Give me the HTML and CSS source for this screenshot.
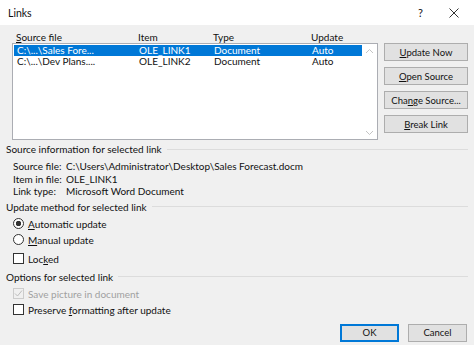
FILE: index.html
```html
<!DOCTYPE html>
<html lang="en">
<head>
  <title>Links</title>
  <meta charset="utf-8">
  <link rel="stylesheet" href="styles.css">
</head>
<body>
  <div class="dialog">
    <div class="titlebar">
      <span class="title">Links</span>
      <span class="help">?</span>
      <svg class="close" width="10" height="10" viewBox="0 0 10 10">
        <path d="M0.5 0.5 L9.5 9.5 M9.5 0.5 L0.5 9.5" stroke="#333" stroke-width="1"/>
      </svg>
    </div>

    <div class="content">
      <div class="top">
        <div class="links">
          <div class="list-head cols">
            <span><u>S</u>ource file</span>
            <span>Item</span>
            <span>Type</span>
            <span>Update</span>
          </div>
          <div class="list">
            <div class="rows">
              <div class="row cols selected">
                <span>C:\...\Sales Fore...</span>
                <span>OLE_LINK1</span>
                <span>Document</span>
                <span>Auto</span>
              </div>
              <div class="row cols">
                <span>C:\...\Dev Plans....</span>
                <span>OLE_LINK2</span>
                <span>Document</span>
                <span>Auto</span>
              </div>
            </div>
            <div class="scrollbar">
              <svg width="9" height="6" viewBox="0 0 9 6"><path d="M1 5 L4.5 1.5 L8 5" fill="none" stroke="#C4C4C4"/></svg>
              <svg width="9" height="6" viewBox="0 0 9 6"><path d="M1 1 L4.5 4.5 L8 1" fill="none" stroke="#C4C4C4"/></svg>
            </div>
          </div>
        </div>
        <div class="side-buttons">
          <button class="btn"><u>U</u>pdate Now</button>
          <button class="btn"><u>O</u>pen Source</button>
          <button class="btn">Cha<u>n</u>ge Source...</button>
          <button class="btn"><u>B</u>reak Link</button>
        </div>
      </div>

      <div class="group-title">Source information for selected link</div>
      <div class="info">
        <span>Source file:</span><span>C:\Users\Administrator\Desktop\Sales Forecast.docm</span>
        <span>Item in file:</span><span>OLE_LINK1</span>
        <span>Link type:</span><span>Microsoft Word Document</span>
      </div>

      <div class="group-title">Update method for selected link</div>
      <div class="options">
        <label class="option"><span class="radio checked"></span><span><u>A</u>utomatic update</span></label>
        <label class="option"><span class="radio"></span><span><u>M</u>anual update</span></label>
        <label class="option locked"><span class="check"></span><span>Loc<u>k</u>ed</span></label>
      </div>

      <div class="group-title">Options for selected link</div>
      <div class="options">
        <label class="option disabled">
          <span class="check">
            <svg width="9" height="9" viewBox="0 0 9 9"><path d="M1 4.5 L3.5 7 L8 1.5" fill="none" stroke="#BDBDBD" stroke-width="1"/></svg>
          </span>
          <span>Save picture in document</span>
        </label>
        <label class="option"><span class="check"></span><span>Preserve <u>f</u>ormatting after update</span></label>
      </div>

      <div class="footer">
        <button class="btn default">OK</button>
        <button class="btn">Cancel</button>
      </div>
    </div>
  </div>
</body>
</html>
```

FILE: styles.css
```css
*, *::before, *::after {
  margin: 0;
  padding: 0;
  box-sizing: border-box;
}

body {
  width: 474px;
  height: 348px;
  background-color: #FFFFFF;
  color: #111111;
  font-family: "Lato", sans-serif;
  font-size: 10px;
  white-space: nowrap;
}

u {
  text-decoration: underline;
  text-underline-offset: 1px;
}

.titlebar {
  display: flex;
  align-items: center;
  height: 25px;
  padding: 0 15px 0 8px;
  background-color: #FFFFFF;
  font-size: 10.5px;
}

.title {
  flex: 1;
}

.help {
  margin-right: 26px;
  font-size: 11px;
}

.content {
  height: 320px;
  padding: 6px 6px 0 6px;
  background-color: #F0F0F0;
}

.top {
  display: flex;
  gap: 6px;
}

.links {
  width: 372px;
}

.cols {
  display: grid;
  grid-template-columns: 122px 75px 98px 1fr;
}

.list-head {
  height: 12px;
  padding-left: 10px;
  line-height: 12px;
}

.list {
  display: flex;
  height: 97px;
  margin-left: 6px;
  border: 1px solid #ABADB3;
  background-color: #FFFFFF;
}

.rows {
  flex: 1;
  padding: 1px 0 0 1px;
}

.row {
  height: 11px;
  padding-left: 3px;
  line-height: 11px;
}

.row.selected {
  background-color: #0078D7;
  color: #FFFFFF;
}

.scrollbar {
  display: flex;
  flex-direction: column;
  justify-content: space-between;
  align-items: center;
  width: 15px;
  padding: 4px 0 3px;
}

.side-buttons {
  display: flex;
  flex-direction: column;
  gap: 6px;
  padding-top: 12px;
}

.btn {
  height: 18px;
  border: 1px solid #ADADAD;
  background-color: #E1E1E1;
  color: #111111;
  font-family: inherit;
  font-size: 9.5px;
  white-space: nowrap;
}

.side-buttons .btn {
  width: 84px;
}

.group-title {
  display: flex;
  align-items: center;
  height: 12px;
  line-height: 12px;
}

.group-title::after {
  content: "";
  flex: 1;
  height: 1px;
  margin-left: 5px;
  background-color: #DCDCDC;
}

.top + .group-title {
  margin-top: 3px;
}

.info {
  display: grid;
  grid-template-columns: 53px 1fr;
  padding: 5px 0 3px 7px;
  line-height: 12.5px;
}

.options {
  padding: 3px 0 4px 7px;
}

.option {
  display: flex;
  align-items: center;
  gap: 4px;
  height: 16px;
}

.option.locked {
  margin-top: 3px;
}

.option.disabled {
  color: #A0A0A0;
}

.radio {
  width: 11px;
  height: 11px;
  border: 1px solid #333333;
  border-radius: 50%;
  background-color: #FFFFFF;
}

.radio.checked {
  background: radial-gradient(circle, #333333 0 2.5px, #FFFFFF 3px);
}

.check {
  display: flex;
  align-items: center;
  justify-content: center;
  width: 11px;
  height: 11px;
  border: 1px solid #333333;
  background-color: #FFFFFF;
}

.disabled .check {
  border-color: #CCCCCC;
  background-color: #F0F0F0;
}

.footer {
  display: flex;
  justify-content: flex-end;
  gap: 9px;
  padding: 2px 1px 0 0;
}

.footer .btn {
  width: 59px;
}

.btn.default {
  border: 2px solid #0078D7;
}
```
